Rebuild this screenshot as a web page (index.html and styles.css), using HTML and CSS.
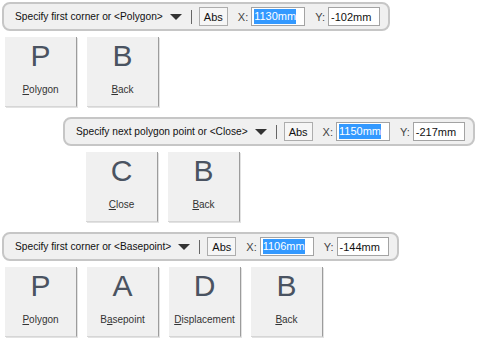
FILE: index.html
```html
<!DOCTYPE html>
<html>
<head>
    <link rel="stylesheet" href="styles.css">
</head>
<body>
    <div class="stage">
        <!-- first corner / polygon -->
        <section class="prompt">
            <div class="bar">
                <span class="question">Specify first corner or &lt;Polygon&gt;</span>
                <span class="arrow"></span>
                <span class="sep"></span>
                <span class="abs">Abs</span>
                <span class="axis">X:</span>
                <span class="field x"><span class="sel">1130mm</span></span>
                <span class="axis">Y:</span>
                <span class="field y">-102mm</span>
            </div>
            <div class="keys">
                <div class="key"><span class="letter">P</span><span class="label"><u>P</u>olygon</span></div>
                <div class="key"><span class="letter">B</span><span class="label"><u>B</u>ack</span></div>
            </div>
        </section>

        <!-- next polygon point -->
        <section class="prompt shifted">
            <div class="bar">
                <span class="question">Specify next polygon point or &lt;Close&gt;</span>
                <span class="arrow"></span>
                <span class="sep"></span>
                <span class="abs">Abs</span>
                <span class="axis">X:</span>
                <span class="field x"><span class="sel">1150mm</span></span>
                <span class="axis">Y:</span>
                <span class="field y">-217mm</span>
            </div>
            <div class="keys">
                <div class="key"><span class="letter">C</span><span class="label"><u>C</u>lose</span></div>
                <div class="key"><span class="letter">B</span><span class="label"><u>B</u>ack</span></div>
            </div>
        </section>

        <!-- first corner / basepoint -->
        <section class="prompt">
            <div class="bar">
                <span class="question">Specify first corner or &lt;Basepoint&gt;</span>
                <span class="arrow"></span>
                <span class="sep"></span>
                <span class="abs">Abs</span>
                <span class="axis">X:</span>
                <span class="field x"><span class="sel">1106mm</span></span>
                <span class="axis">Y:</span>
                <span class="field y">-144mm</span>
            </div>
            <div class="keys">
                <div class="key"><span class="letter">P</span><span class="label"><u>P</u>olygon</span></div>
                <div class="key"><span class="letter">A</span><span class="label">B<u>a</u>sepoint</span></div>
                <div class="key"><span class="letter">D</span><span class="label"><u>D</u>isplacement</span></div>
                <div class="key"><span class="letter">B</span><span class="label"><u>B</u>ack</span></div>
            </div>
        </section>
    </div>
</body>
</html>
```

FILE: styles.css
```css
body {
    margin: 0;
    background-color: #ffffff;
    font-family: "Liberation Sans", Arial, sans-serif;
    color: #111111;
}

.stage {
    padding-top: 2px;
}

.prompt {
    margin-bottom: 10px;
}

.bar {
    display: flex;
    align-items: center;
    width: fit-content;
    height: 29px;
    box-sizing: border-box;
    margin-left: 2px;
    padding: 0 8px 0 11px;
    border: 2px solid #c6c6c6;
    border-radius: 8px;
    background-color: #f0f0f0;
    font-size: 10.2px;
}

.shifted .bar {
    margin-left: 63px;
}

.question {
    white-space: nowrap;
}

.arrow {
    width: 0;
    height: 0;
    margin-left: 7px;
    border-left: 6px solid transparent;
    border-right: 6px solid transparent;
    border-top: 6px solid #333333;
}

.sep {
    width: 1px;
    height: 14px;
    margin-left: 9px;
    background-color: #666666;
}

.abs {
    display: flex;
    align-items: center;
    justify-content: center;
    width: 29px;
    height: 19px;
    box-sizing: border-box;
    margin-left: 7px;
    border: 1px solid #adadad;
    background-color: #f6f6f6;
    font-size: 11px;
}

.axis {
    margin-left: 10px;
    margin-right: 3px;
    color: #444444;
    font-size: 11px;
}

.field {
    display: flex;
    align-items: center;
    height: 19px;
    box-sizing: border-box;
    padding-left: 2px;
    border: 1px solid #a3a3a3;
    background-color: #ffffff;
    font-size: 11px;
}

.field.x {
    width: 54px;
}

.field.y {
    width: 52px;
}

.sel {
    background-color: #3399ff;
    color: #ffffff;
    line-height: 15px;
}

.keys {
    display: flex;
    gap: 10px;
    margin-top: 6px;
    margin-left: 5px;
}

.shifted .keys {
    margin-left: 86px;
}

.key {
    display: flex;
    flex-direction: column;
    align-items: center;
    width: 72px;
    height: 70px;
    box-sizing: border-box;
    padding-top: 4px;
    background-color: #f0f0f0;
    border-right: 1px solid #9c9c9c;
    border-bottom: 1px solid #d6d6d6;
    box-shadow: 1px 1px 0 #e2e2e2;
}

.letter {
    font-size: 30px;
    line-height: 30px;
    color: #4a5361;
}

.label {
    margin-top: 13px;
    font-size: 10px;
    line-height: 12px;
    color: #333333;
}
```
